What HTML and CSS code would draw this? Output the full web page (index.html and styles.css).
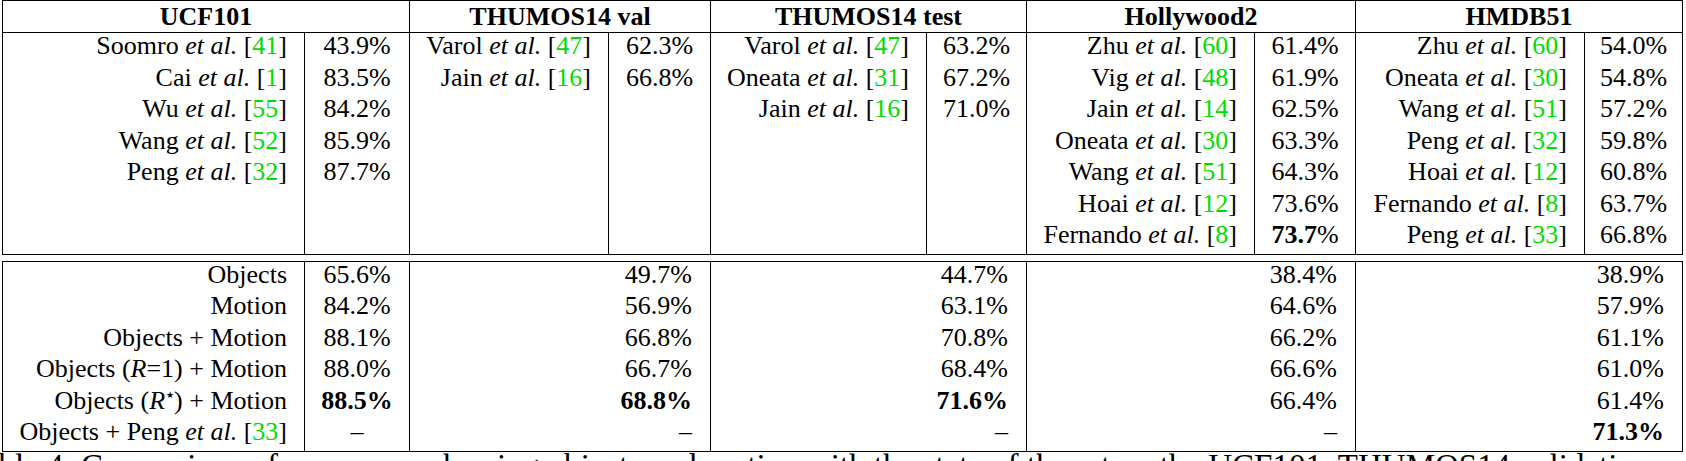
FILE: index.html
```html
<!DOCTYPE html>
<html>
<head>
<meta charset="utf-8">
<link rel="stylesheet" href="styles.css">
</head>
<body>
<div class="page">
  <div class="results results--top">
    <div class="row">
      <div class="cell head">UCF101</div>
      <div class="cell head">THUMOS14 val</div>
      <div class="cell head">THUMOS14 test</div>
      <div class="cell head">Hollywood2</div>
      <div class="cell head">HMDB51</div>
    </div>
    <div class="row">
      <div class="cell name">Soomro <i>et al.</i> [<span class="ref">41</span>]</div><div class="cell value">43.9%</div>
      <div class="cell name">Varol <i>et al.</i> [<span class="ref">47</span>]</div><div class="cell value">62.3%</div>
      <div class="cell name">Varol <i>et al.</i> [<span class="ref">47</span>]</div><div class="cell value">63.2%</div>
      <div class="cell name">Zhu <i>et al.</i> [<span class="ref">60</span>]</div><div class="cell value">61.4%</div>
      <div class="cell name">Zhu <i>et al.</i> [<span class="ref">60</span>]</div><div class="cell value">54.0%</div>
    </div>
    <div class="row">
      <div class="cell name">Cai <i>et al.</i> [<span class="ref">1</span>]</div><div class="cell value">83.5%</div>
      <div class="cell name">Jain <i>et al.</i> [<span class="ref">16</span>]</div><div class="cell value">66.8%</div>
      <div class="cell name">Oneata <i>et al.</i> [<span class="ref">31</span>]</div><div class="cell value">67.2%</div>
      <div class="cell name">Vig <i>et al.</i> [<span class="ref">48</span>]</div><div class="cell value">61.9%</div>
      <div class="cell name">Oneata <i>et al.</i> [<span class="ref">30</span>]</div><div class="cell value">54.8%</div>
    </div>
    <div class="row">
      <div class="cell name">Wu <i>et al.</i> [<span class="ref">55</span>]</div><div class="cell value">84.2%</div>
      <div class="cell name"></div><div class="cell value"></div>
      <div class="cell name">Jain <i>et al.</i> [<span class="ref">16</span>]</div><div class="cell value">71.0%</div>
      <div class="cell name">Jain <i>et al.</i> [<span class="ref">14</span>]</div><div class="cell value">62.5%</div>
      <div class="cell name">Wang <i>et al.</i> [<span class="ref">51</span>]</div><div class="cell value">57.2%</div>
    </div>
    <div class="row">
      <div class="cell name">Wang <i>et al.</i> [<span class="ref">52</span>]</div><div class="cell value">85.9%</div>
      <div class="cell name"></div><div class="cell value"></div>
      <div class="cell name"></div><div class="cell value"></div>
      <div class="cell name">Oneata <i>et al.</i> [<span class="ref">30</span>]</div><div class="cell value">63.3%</div>
      <div class="cell name">Peng <i>et al.</i> [<span class="ref">32</span>]</div><div class="cell value">59.8%</div>
    </div>
    <div class="row">
      <div class="cell name">Peng <i>et al.</i> [<span class="ref">32</span>]</div><div class="cell value">87.7%</div>
      <div class="cell name"></div><div class="cell value"></div>
      <div class="cell name"></div><div class="cell value"></div>
      <div class="cell name">Wang <i>et al.</i> [<span class="ref">51</span>]</div><div class="cell value">64.3%</div>
      <div class="cell name">Hoai <i>et al.</i> [<span class="ref">12</span>]</div><div class="cell value">60.8%</div>
    </div>
    <div class="row">
      <div class="cell name"></div><div class="cell value"></div>
      <div class="cell name"></div><div class="cell value"></div>
      <div class="cell name"></div><div class="cell value"></div>
      <div class="cell name">Hoai <i>et al.</i> [<span class="ref">12</span>]</div><div class="cell value">73.6%</div>
      <div class="cell name">Fernando <i>et al.</i> [<span class="ref">8</span>]</div><div class="cell value">63.7%</div>
    </div>
    <div class="row">
      <div class="cell name"></div><div class="cell value"></div>
      <div class="cell name"></div><div class="cell value"></div>
      <div class="cell name"></div><div class="cell value"></div>
      <div class="cell name">Fernando <i>et al.</i> [<span class="ref">8</span>]</div><div class="cell value"><b>73.7</b>%</div>
      <div class="cell name">Peng <i>et al.</i> [<span class="ref">33</span>]</div><div class="cell value">66.8%</div>
    </div>
  </div>

  <div class="results results--bottom">
    <div class="row">
      <div class="cell name">Objects</div><div class="cell value">65.6%</div>
      <div class="cell merged">49.7%</div>
      <div class="cell merged">44.7%</div>
      <div class="cell merged">38.4%</div>
      <div class="cell merged">38.9%</div>
    </div>
    <div class="row">
      <div class="cell name">Motion</div><div class="cell value">84.2%</div>
      <div class="cell merged">56.9%</div>
      <div class="cell merged">63.1%</div>
      <div class="cell merged">64.6%</div>
      <div class="cell merged">57.9%</div>
    </div>
    <div class="row">
      <div class="cell name">Objects + Motion</div><div class="cell value">88.1%</div>
      <div class="cell merged">66.8%</div>
      <div class="cell merged">70.8%</div>
      <div class="cell merged">66.2%</div>
      <div class="cell merged">61.1%</div>
    </div>
    <div class="row">
      <div class="cell name">Objects (<i>R</i>=1) + Motion</div><div class="cell value">88.0%</div>
      <div class="cell merged">66.7%</div>
      <div class="cell merged">68.4%</div>
      <div class="cell merged">66.6%</div>
      <div class="cell merged">61.0%</div>
    </div>
    <div class="row">
      <div class="cell name">Objects (<i>R</i><sup class="star">★</sup>) + Motion</div><div class="cell value"><b>88.5%</b></div>
      <div class="cell merged"><b>68.8%</b></div>
      <div class="cell merged"><b>71.6%</b></div>
      <div class="cell merged">66.4%</div>
      <div class="cell merged">61.4%</div>
    </div>
    <div class="row">
      <div class="cell name">Objects + Peng <i>et al.</i> [<span class="ref">33</span>]</div><div class="cell value">–</div>
      <div class="cell merged">–</div>
      <div class="cell merged">–</div>
      <div class="cell merged">–</div>
      <div class="cell merged"><b>71.3%</b></div>
    </div>
  </div>

  <p class="caption">Table 4: Comparison of our approach using objects and motion with the state of the art on the UCF101, THUMOS14 validation</p>
</div>
</body>
</html>
```

FILE: styles.css
```css
html, body {
  margin: 0;
  padding: 0;
  background: #fff;
  overflow: hidden;
}

body {
  font-family: "Liberation Serif", "DejaVu Serif", serif;
  color: #000;
}

.page {
  width: 1686px;
  height: 461px;
  padding-left: 2px;
  box-sizing: border-box;
  overflow: hidden;
}

.results {
  display: grid;
  grid-template-columns: 302px 105px 199px 102px 216px 100px 228px 101px 229px 97px;
  width: max-content;
  border: 1px solid #000;
  font-size: 26px;
}

.results--bottom {
  margin-top: 6px;
}

.row {
  display: contents;
}

.cell {
  box-sizing: border-box;
  height: 31.5px;
  line-height: 26.5px;
  padding-bottom: 5px;
  border-right: 1px solid #000;
  white-space: nowrap;
}

.row > .cell:last-child {
  border-right: none;
}

.results--top .head {
  grid-column: span 2;
  height: 32px;
  line-height: 31px;
  padding-bottom: 0;
  text-align: center;
  font-weight: bold;
  border-bottom: 1px solid #000;
}

.name {
  text-align: right;
  padding-right: 17px;
}

.value {
  text-align: center;
}

.merged {
  grid-column: span 2;
  text-align: right;
  padding-right: 18px;
}

.ref {
  color: #00dc00;
}

.star {
  font-family: "DejaVu Sans", sans-serif;
  font-size: 9px;
  vertical-align: 11px;
  line-height: 0;
  margin-left: 1px;
}

.caption {
  margin: -2px 0 0 -36px;
  font-size: 33px;
  line-height: 33px;
  white-space: nowrap;
}
```
